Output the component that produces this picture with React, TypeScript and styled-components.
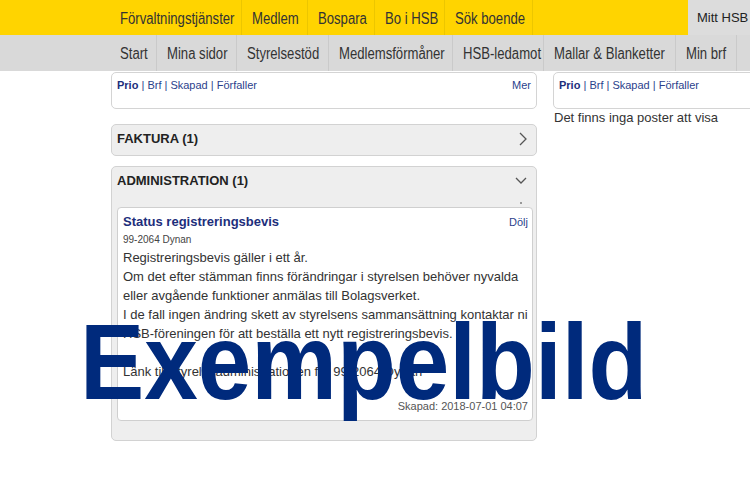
import styled, { createGlobalStyle } from "styled-components";

const GlobalStyle = createGlobalStyle`
  body {
    margin: 0;
    background: #fff;
    font-family: "Liberation Sans", Arial, sans-serif;
    overflow: hidden;
  }
`;

// label + item width (the narrow font is not installed, so widths are fixed)
const topItems: [string, number][] = [
  ["Förvaltningstjänster", 132],
  ["Medlem", 66],
  ["Bospara", 67],
  ["Bo i HSB", 70],
  ["Sök boende", 88],
];

const subItems: [string, number][] = [
  ["Start", 47],
  ["Mina sidor", 80],
  ["Styrelsestöd", 92],
  ["Medlemsförmåner", 124],
  ["HSB-ledamot", 91],
  ["Mallar & Blanketter", 132],
  ["Min brf", 61],
];

const bodyLines = [
  "Registreringsbevis gäller i ett år.",
  "Om det efter stämman finns förändringar i styrelsen behöver nyvalda",
  "eller avgående funktioner anmälas till Bolagsverket.",
  "I de fall ingen ändring skett av styrelsens sammansättning kontaktar ni",
  "HSB-föreningen för att beställa ett nytt registreringsbevis.",
];

function Filters() {
  return (
    <FilterLinks>
      <b>Prio</b> | Brf | Skapad | Förfaller
    </FilterLinks>
  );
}

export default function App() {
  return (
    <Page>
      <GlobalStyle />
      <TopNav>
        {topItems.map(([label, w]) => (
          <TopItem key={label} $w={w}>
            <NavLabel>{label}</NavLabel>
          </TopItem>
        ))}
        <MittTab>Mitt HSB</MittTab>
      </TopNav>
      <SubNav>
        {subItems.map(([label, w]) => (
          <SubItem key={label} $w={w}>
            <NavLabel>{label}</NavLabel>
          </SubItem>
        ))}
      </SubNav>

      <Content>
        <LeftColumn>
          <ListBox>
            <Filters />
            <MoreLink>Mer</MoreLink>
          </ListBox>

          <Section $gap={15}>
            <SectionHeader>
              FAKTURA (1)
              <svg width="10" height="14" viewBox="0 0 10 14">
                <polyline
                  points="2,1 8,7 2,13"
                  fill="none"
                  stroke="#555"
                  strokeWidth="1.3"
                />
              </svg>
            </SectionHeader>
          </Section>

          <Section $gap={10}>
            <SectionHeader>
              ADMINISTRATION (1)
              <svg width="14" height="8" viewBox="0 0 14 8">
                <polyline
                  points="2,1 7,6 12,1"
                  fill="none"
                  stroke="#555"
                  strokeWidth="1.3"
                />
              </svg>
            </SectionHeader>
            <DotRow>
              <Dot />
            </DotRow>
            <Card>
              <CardHead>
                <CardTitle>Status registreringsbevis</CardTitle>
                <HideLink>Dölj</HideLink>
              </CardHead>
              <Meta>99-2064 Dynan</Meta>
              <CardBody>
                {bodyLines.map((line) => (
                  <Line key={line}>{line}</Line>
                ))}
                <Line>&nbsp;</Line>
                <Line>Länk till styrelseadministrationen för 99-2064 Dynan</Line>
              </CardBody>
              <Created>Skapad: 2018-07-01 04:07</Created>
            </Card>
          </Section>
        </LeftColumn>

        <RightColumn>
          <ListBox>
            <Filters />
          </ListBox>
          <Empty>Det finns inga poster att visa</Empty>
        </RightColumn>
      </Content>

      <Watermark>Exempelbild</Watermark>
    </Page>
  );
}

const Page = styled.div`
  position: relative;
  width: 750px;
  height: 500px;
  overflow: hidden;
`;

const TopNav = styled.nav`
  display: flex;
  height: 35px;
  padding-left: 110px;
  background: #ffd400;
`;

const TopItem = styled.div<{ $w: number }>`
  flex: none;
  display: flex;
  align-items: center;
  width: ${({ $w }) => $w}px;
  padding: 2px 0 0 10px;
  box-sizing: border-box;
  overflow: hidden;

  border-right: 1px solid #ecc600;
`;

const NavLabel = styled.span`
  display: inline-block;
  transform: scaleX(0.82);
  transform-origin: left center;

  font-size: 16px;
  color: #333;
  white-space: nowrap;
`;

const MittTab = styled.div`
  flex: none;
  display: flex;
  align-items: center;
  width: 62px;
  margin-left: auto;
  padding-left: 9px;
  box-sizing: border-box;

  background: #dcdcdc;
  font-size: 13px;
  color: #222;
  white-space: nowrap;
`;

const SubNav = styled.nav`
  display: flex;
  height: 36px;
  padding-left: 110px;
  background: #d9d9d9;
`;

const SubItem = styled(TopItem)`
  border-right: 1px solid #cacaca;
`;

const Content = styled.main`
  display: flex;
  column-gap: 16px;
  padding: 1px 0 0 111px;
`;

const LeftColumn = styled.div`
  flex: none;
  width: 426px;
`;

const RightColumn = styled.div`
  flex: none;
  width: 260px;
`;

const ListBox = styled.div`
  display: flex;
  justify-content: space-between;
  height: 37px;
  padding: 6px 5px 0;
  box-sizing: border-box;

  border: 1px solid #d4d4d4;
  border-radius: 5px;
`;

const FilterLinks = styled.div`
  font-size: 11px;
  color: #2b3f8c;

  b {
    color: #1e2f7c;
  }
`;

const MoreLink = styled.span`
  font-size: 11px;
  color: #2b3f8c;
`;

const Section = styled.section<{ $gap: number }>`
  margin-top: ${({ $gap }) => $gap}px;

  background: #eeeeee;
  border: 1px solid #d2d2d2;
  border-radius: 5px;

  &:last-child {
    padding-bottom: 19px;
  }
`;

const SectionHeader = styled.header`
  display: flex;
  justify-content: space-between;
  align-items: center;
  height: 27px;
  padding: 0 8px 3px 5px;

  font-size: 13px;
  font-weight: bold;
  color: #222;
`;

const DotRow = styled.div`
  display: flex;
  justify-content: flex-end;
  height: 10px;
  padding-right: 14px;
`;

const Dot = styled.span`
  width: 2px;
  height: 2px;
  margin-top: 5px;
  background: #999;
`;

const Card = styled.article`
  margin: 0 3px 0 5px;
  padding: 6px 4px 6px 5px;

  background: #fff;
  border: 1px solid #cfcfcf;
  border-radius: 4px;
`;

const CardHead = styled.div`
  display: flex;
  justify-content: space-between;
  align-items: center;
  line-height: 16px;
`;

const CardTitle = styled.h3`
  margin: 0;
  font-size: 13px;
  font-weight: bold;
  color: #1d2e7b;
`;

const HideLink = styled.span`
  font-size: 11px;
  color: #2b3f8c;
`;

const Meta = styled.div`
  margin-top: 2px;
  font-size: 10px;
  line-height: 16px;
  color: #444;
`;

const CardBody = styled.div`
  font-size: 13px;
  line-height: 19px;
  color: #333;
`;

const Line = styled.div`
  white-space: nowrap;
`;

const Created = styled.div`
  margin-top: 17px;
  font-size: 11px;
  line-height: 16px;
  text-align: right;
  color: #555;
`;

const Empty = styled.p`
  margin: 1px 0 0 1px;
  font-size: 13px;
  line-height: 16px;
  color: #333;
`;

const Watermark = styled.div`
  position: absolute;
  left: 80px;
  top: 309px;

  font-size: 107px;
  font-weight: bold;
  line-height: 1;
  color: #002a7c;
  white-space: nowrap;

  transform: scaleX(0.9);
  transform-origin: left top;
  pointer-events: none;
`;
